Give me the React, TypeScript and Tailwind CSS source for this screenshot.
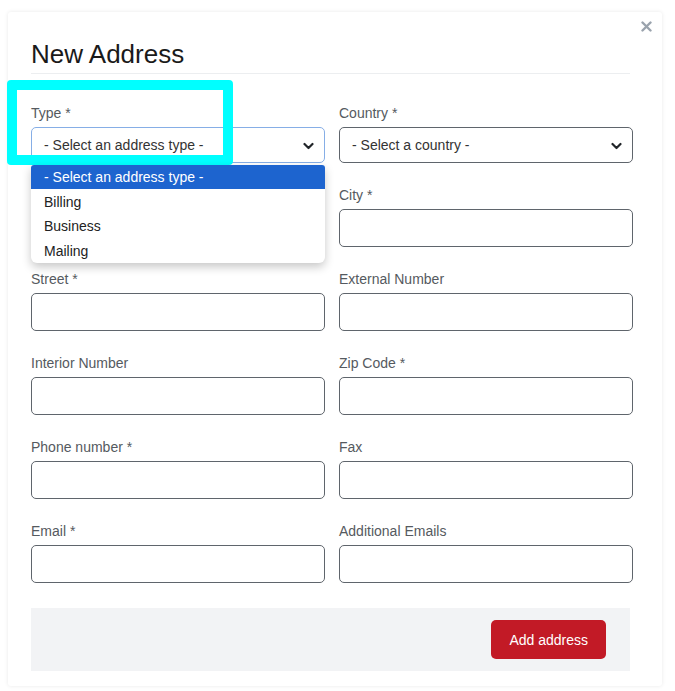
import React from "react";

const Chevron = () => (
  <svg className="w-[11px] h-[8px]" viewBox="0 0 11 8" fill="none">
    <path d="M1.5 2 L5.5 6 L9.5 2" stroke="#212529" strokeWidth="2.2" strokeLinecap="round" strokeLinejoin="round" />
  </svg>
);

const Field = ({ label, children }: { label: string; children: React.ReactNode }) => (
  <div className="flex flex-col">
    <label className="h-5 mb-1 text-[14px] leading-5 text-[#555a60]">{label}</label>
    {children}
  </div>
);

const TextBox = () => (
  <div className="h-[38px] w-full rounded-[5px] border border-[#5f656c] bg-white" />
);

const typeOptions = ["- Select an address type -", "Billing", "Business", "Mailing"];

export default function App() {
  const rows: [string, string][] = [
    ["Street *", "External Number"],
    ["Interior Number", "Zip Code *"],
    ["Phone number *", "Fax"],
    ["Email *", "Additional Emails"],
  ];

  return (
    <div className="min-h-screen bg-white pt-3 pl-2 font-['Liberation_Sans',Arial,sans-serif]">
      <div className="relative w-[654px] h-[674px] bg-white rounded-[3px] shadow-[0_0_4px_rgba(0,0,0,0.09)] px-[23px]">
        {/* Close */}
        <button className="absolute right-[10px] top-[9px]">
          <svg className="w-[11px] h-[11px]" viewBox="0 0 11 11">
            <path d="M1.5 1.5 L9.5 9.5 M9.5 1.5 L1.5 9.5" stroke="#9aa3ad" strokeWidth="2.4" strokeLinecap="round" />
          </svg>
        </button>

        {/* Header */}
        <div className="w-[599px] pt-[27px] pb-[4px] border-b border-[#eceef0]">
          <h2 className="text-[26px] leading-[30px] text-[#1a1a1a]">New Address</h2>
        </div>

        {/* Form */}
        <div className="w-[602px] mt-[29px] grid grid-cols-2 gap-x-[14px] gap-y-[22px]">
          <Field label="Type *">
            <div className="relative">
              <div className="h-[36px] w-full rounded-[5px] border border-[#86aee6] bg-white flex items-center justify-between pl-[12px] pr-[10px] pt-[1px]">
                <span className="text-[14px] text-[#333]">- Select an address type -</span>
                <Chevron />
              </div>
              {/* Open list */}
              <div className="absolute left-0 top-[38px] z-10 w-full h-[98px] bg-white rounded-b-[6px] rounded-t-[3px] overflow-hidden shadow-[0_4px_10px_rgba(0,0,0,0.22)]">
                {typeOptions.map((opt, i) => (
                  <div
                    key={opt}
                    className={
                      i === 0
                        ? "h-[24px] pl-[13px] pt-[1px] flex items-center text-[14px] bg-[#1d64cf] text-white"
                        : "h-[24.5px] pl-[13px] pt-[2px] flex items-center text-[14px] text-[#222]"
                    }
                  >
                    {opt}
                  </div>
                ))}
              </div>
            </div>
          </Field>
          <Field label="Country *">
            <div className="h-[36px] w-full rounded-[5px] border border-[#5f656c] bg-white flex items-center justify-between pl-[12px] pr-[10px] pt-[1px]">
              <span className="text-[14px] text-[#333]">- Select a country -</span>
              <Chevron />
            </div>
          </Field>

          <Field label="State *">
            <TextBox />
          </Field>
          <Field label="City *">
            <TextBox />
          </Field>

          {rows.map(([a, b]) => (
            <React.Fragment key={a}>
              <Field label={a}>
                <TextBox />
              </Field>
              <Field label={b}>
                <TextBox />
              </Field>
            </React.Fragment>
          ))}
        </div>

        {/* Footer */}
        <div className="w-[599px] h-[63px] mt-[25px] bg-[#f2f3f5] flex items-center justify-end pr-[24px]">
          <button className="h-[39px] px-[18px] pt-[1px] rounded-[5px] bg-[#c21a26] text-white text-[14px]">
            Add address
          </button>
        </div>

        {/* Highlight annotation */}
        <div className="absolute left-[-1px] top-[68px] w-[226px] h-[85px] border-[10px] border-[#00ffff] rounded-[4px] pointer-events-none" />
      </div>
    </div>
  );
}
